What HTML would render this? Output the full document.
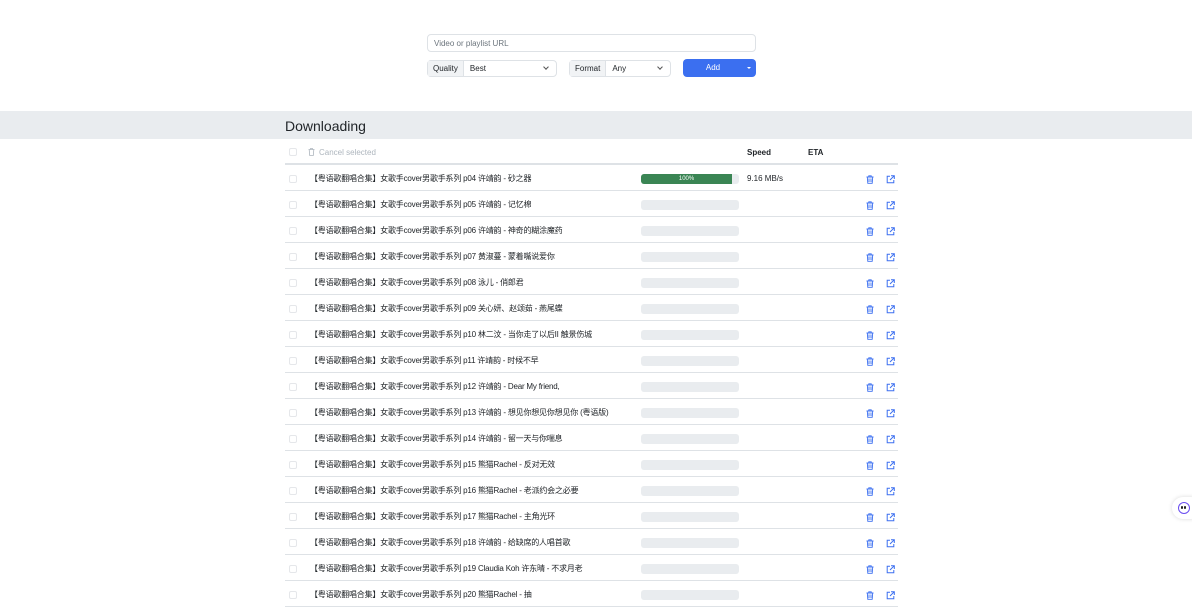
<!DOCTYPE html>
<html><head><meta charset="utf-8"><style>
*{box-sizing:border-box;margin:0;padding:0}
body{width:1192px;height:610px;overflow:hidden;background:#fff;font-family:"Liberation Sans","Noto Sans CJK SC",sans-serif;color:#212529;position:relative}
.url{position:absolute;left:427px;top:34px;width:329px;height:18px;border:1px solid #dee2e6;border-radius:4px;font-size:8px;color:#6c757d;padding:4px 6px;line-height:9px}
.grp{position:absolute;top:60px;height:17px;border:1px solid #dee2e6;border-radius:4px;display:flex;font-size:8px;line-height:15px}
.grp .l{background:#f1f3f5;padding:0 5px;border-right:1px solid #dee2e6}
.grp .v{flex:1;padding:0 6px;position:relative}
.grp .v:after{content:"";position:absolute;right:8px;top:4px;width:3px;height:3px;border-right:1px solid #555;border-bottom:1px solid #555;transform:rotate(45deg)}
.add{position:absolute;left:683px;top:59px;width:73px;height:18px;background:#3b6ff0;border-radius:4px;color:#fff;font-size:8px;line-height:18px}
.add span{position:absolute;left:0;width:60px;text-align:center}
.add i{position:absolute;right:5px;top:8px;border-left:2.5px solid transparent;border-right:2.5px solid transparent;border-top:2.5px solid #fff}
.band{position:absolute;left:0;top:111px;width:1192px;height:28px;background:#e9ecef}
.band h2{position:absolute;left:285px;top:7px;font-weight:normal;font-size:14px;color:#212529}
.tbl{position:absolute;left:285px;top:139px;width:613px}
.hd{height:26px;border-bottom:2px solid #dee2e6;position:relative;font-size:8px}
.row{height:26px;border-bottom:1px solid #dee2e6;position:relative;font-size:8px}
.cb{position:absolute;left:4px;top:9px;width:8px;height:8px;border:1px solid #e5e7ea;border-radius:2px}
.row .cb{top:10px}
.t{position:absolute;left:25px;top:9px;line-height:10px;white-space:nowrap;letter-spacing:-0.2px}
.bar{position:absolute;left:356px;top:9px;width:98px;height:10px;background:#e9ecef;border-radius:3px;overflow:hidden}
.bar b{display:block;height:100%;width:93%;background:#3a8554;color:#fff;font-size:6px;font-weight:normal;text-align:center;line-height:10px}
.ic{position:absolute;top:10px}
</style></head><body>
<div class="url">Video or playlist URL</div>
<div class="grp" style="left:427px;width:130px"><div class="l">Quality</div><div class="v">Best</div></div>
<div class="grp" style="left:569px;width:102px"><div class="l">Format</div><div class="v">Any</div></div>
<div class="add"><span>Add</span><i></i></div>
<div class="band"><h2>Downloading</h2></div>
<div class="tbl">
<div class="hd"><div class="cb"></div>
<svg style="position:absolute;left:23px;top:9px" width="7" height="8" viewBox="0 0 7 8"><path d="M0.5 1.5h6M2.5 1.5V0.5h2v1M1.2 1.5l.5 6h3.6l.5-6" fill="none" stroke="#adb5bd" stroke-width="0.8"/></svg>
<span style="position:absolute;left:34px;top:9px;color:#adb5bd">Cancel selected</span>
<b style="position:absolute;left:462px;top:9px">Speed</b><b style="position:absolute;left:523px;top:9px">ETA</b></div>
<div id="rows"></div>
</div>
<div style="position:absolute;left:1172px;top:497px;width:30px;height:22px;border-radius:11px;background:#fff;box-shadow:0 0 4px rgba(0,0,0,.15)"></div>
<div style="position:absolute;left:1178px;top:502px;width:12px;height:12px;border-radius:6px;border:1.5px solid #6a4df0;background:#fff"><i style="position:absolute;left:2px;top:3px;width:2px;height:3px;background:#222;border-radius:1px"></i><i style="position:absolute;left:5px;top:3px;width:2px;height:3px;background:#222;border-radius:1px"></i></div>
<script>
var t=["p04 许靖韵 - 砂之器","p05 许靖韵 - 记忆棉","p06 许靖韵 - 神奇的糊涂魔药","p07 黄淑蔓 - 蒙着嘴说爱你","p08 泳儿 - 俏郎君","p09 关心妍、赵颂茹 - 燕尾蝶","p10 林二汶 - 当你走了以后II 触景伤城","p11 许靖韵 - 时候不早","p12 许靖韵 - Dear My friend,","p13 许靖韵 - 想见你想见你想见你 (粤语版)","p14 许靖韵 - 留一天与你喘息","p15 熊猫Rachel - 反对无效","p16 熊猫Rachel - 老派约会之必要","p17 熊猫Rachel - 主角光环","p18 许靖韵 - 给缺席的人唱首歌","p19 Claudia Koh 许东晴 - 不求月老","p20 熊猫Rachel - 抽"];
var h="";t.forEach(function(s,i){h+='<div class="row"><div class="cb"></div><div class="t">【粤语歌翻唱合集】女歌手cover男歌手系列 '+s+'</div><div class="bar">'+(i==0?'<b>100%</b>':'')+'</div>'+(i==0?'<span style="position:absolute;left:462px;top:9px;line-height:10px">9.16 MB/s</span>':'')+'<svg class="ic" style="left:581px" width="8" height="9" viewBox="0 0 8 9"><path d="M0.5 2h7M2.8 2V0.8h2.4V2M1.3 2l.5 6.3h4.4l.5-6.3M3 3.5v3.5M5 3.5v3.5" fill="none" stroke="#3b6ff0" stroke-width="0.9"/></svg><svg class="ic" style="left:601px" width="9" height="9" viewBox="0 0 9 9"><path d="M4 1.2H1.2v6.6h6.6V5M5 0.7h3.3V4M8.3 0.7L4 5" fill="none" stroke="#3b6ff0" stroke-width="1"/></svg></div>'});
document.getElementById("rows").innerHTML=h;
</script>
</body></html>
